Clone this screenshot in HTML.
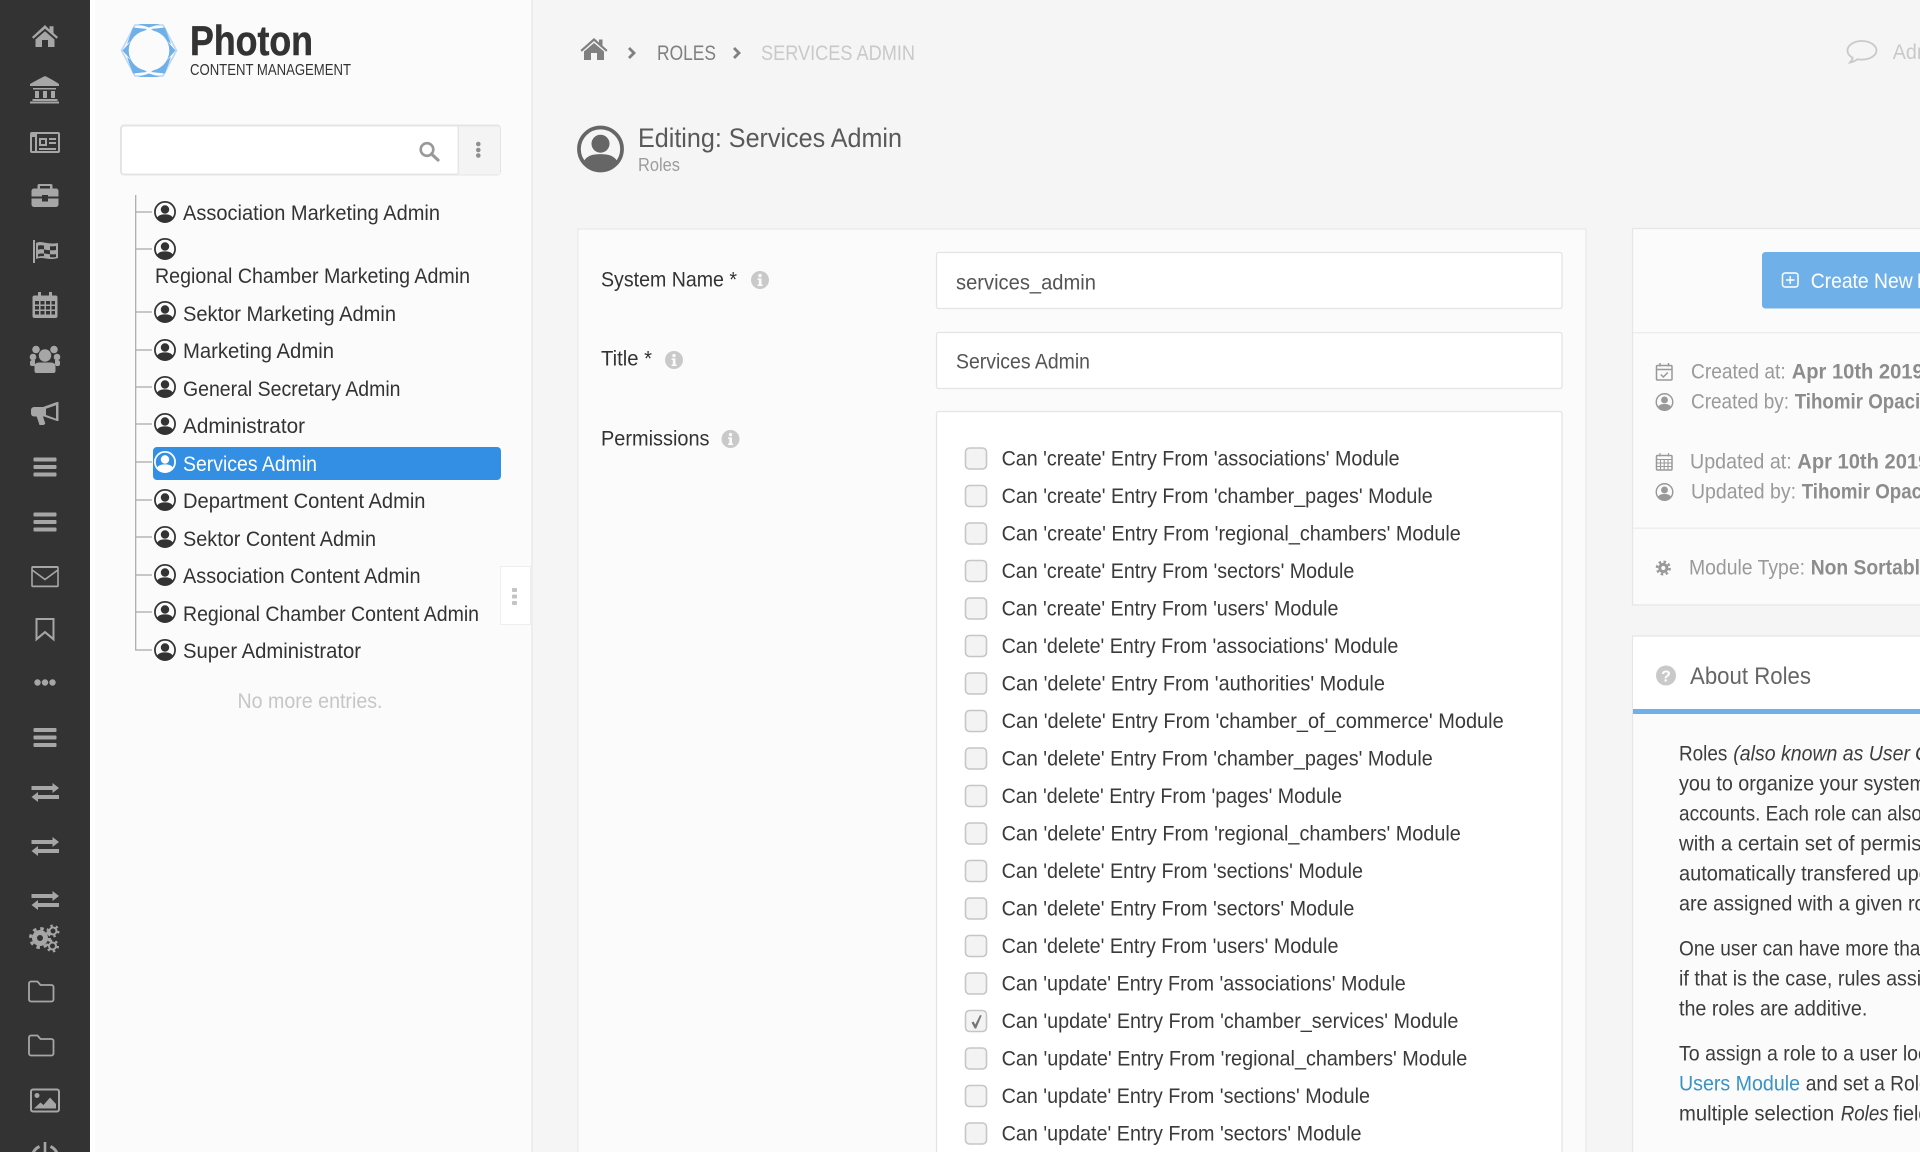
<!DOCTYPE html>
<html lang="en"><head><meta charset="utf-8"><title>Photon - Editing: Services Admin</title>
<style>
html,body{margin:0;padding:0;background:#f5f5f5;overflow:hidden;width:1920px;height:1152px}
svg{display:block}
text{font-family:"Liberation Sans",sans-serif;font-size:21px;fill:#333;white-space:pre}
.tree{fill:#333}
.perm{fill:#3a3a3a}
.meta{fill:#9a9a9a}
.b{font-weight:700;fill:#8c8c8c}
.p{fill:#3d3d3d}
.side path,.side rect.f,.side circle.f{fill:#a6a6a6}
</style></head><body>
<svg width="1920" height="1152" viewBox="0 0 1920 1152" xmlns="http://www.w3.org/2000/svg">
<defs>
<symbol id="u" viewBox="0 0 24 24"><circle cx="12" cy="12" r="11" fill="none" stroke="currentColor" stroke-width="1.9"/><circle cx="12" cy="9.3" r="4.6" fill="currentColor"/><path fill="currentColor" d="M3.4 18.3C5 15.4 8 14.6 12 14.6s7 .8 8.6 3.7A11 11 0 0 1 3.4 18.3Z"/></symbol>
<symbol id="i" viewBox="0 0 18 18"><circle cx="9" cy="9" r="9" fill="#c9c9c9"/><circle cx="9" cy="4.6" r="1.7" fill="#fbfbfb"/><path fill="#fbfbfb" d="M6.6 7.4h3.9v6h1.1v1.6H6.6v-1.6h1.2V9H6.6Z"/></symbol>
<symbol id="cb" viewBox="0 0 23 23"><rect x="1" y="1" width="21" height="21" rx="4" fill="#f3f3f3" stroke="#c6c6c6" stroke-width="1.6"/></symbol>
<g id="bars" fill="#a6a6a6"><rect x="33.5" y="0" width="23" height="4" rx="1"/><rect x="33.5" y="7.5" width="23" height="4" rx="1"/><rect x="33.5" y="15" width="23" height="4" rx="1"/></g>
<path id="arr" fill="#a6a6a6" d="M31.5 3h21V0l6.5 5-6.5 5V7h-21ZM59 12H38V9l-6.5 5 6.5 5v-3h21Z"/>
<path id="fold" fill="none" d="M31 0h6.5l3 3.5H51.500a2 2 0 0 1 2 2V18a2 2 0 0 1-2 2H31a2 2 0 0 1-2-2V2a2 2 0 0 1 2-2Z"/>
</defs>

<!-- backgrounds -->
<rect width="1920" height="1152" fill="#f5f5f5"/>
<rect x="90" width="441" height="1152" fill="#fbfbfb"/>
<rect x="90" width="5" height="1152" fill="#fff"/>
<rect x="531" width="2" height="1152" fill="#ededed"/>
<rect width="90" height="1152" fill="#333"/>

<!-- sidebar icons -->
<g class="side">
<path d="M45 25 32 37l1.400 1.800L45 28.700 56.600 38.800 58 37l-4.500-4V26.300h-4v3.300ZM35.500 39.500 45 31.200l9.500 8.300V47H48v-7h-6v7h-6.500Z"/>
<path d="M45 76C50 78.500 55 81 59 84v2H30v-2C35 81 40 78.500 45 76ZM33 88h23v1.500H33ZM35 91h4v7h-4ZM43 91h4v7h-4ZM51 91h4v7h-4ZM32.500 99h25v2h-25ZM30 101.500h29v2H30Z"/>
<path d="M30 134a2 2 0 0 1 2-2h26a2 2 0 0 1 2 2v17a2 2 0 0 1-2 2H32a2 2 0 0 1-2-2Zm7 0v17h21v-17Zm-5 3v14h3v-14Zm7 1h8v8h-8Zm2 2v4h4v-4Zm8-2h7v2h-7Zm0 4h7v2h-7Zm-10 6h17v2H39Z" fill-rule="evenodd"/>
<path d="M39 184h12a1.500 1.500 0 0 1 1.500 1.500v3h3.500a2.500 2.500 0 0 1 2.500 2.500v5.500H48v-1.500h-6v1.500H31.500V191a2.500 2.500 0 0 1 2.500-2.500h3.500v-3A1.500 1.500 0 0 1 39 184Zm1 2v2.500h10V186ZM31.500 198.500H42v3h6v-3h10.500v6a2.500 2.500 0 0 1-2.500 2.500H34a2.500 2.500 0 0 1-2.500-2.500Z" fill-rule="evenodd"/>
<path d="M33 240h2v23h-2ZM36 243c6-3 10 2 22 0v15c-10 3-15-2-22 1Zm2 2.600v4.200c2-.8 4-.8 6-.4v-3.800c-2-.4-4-.4-6 0Zm6 3.800v4c2 .3 4 .8 6 .9v-4c-2-.1-4-.5-6-.9Zm6 .9c2 .1 4 .1 6-.3v-4c-2 .4-4 .4-6 .3Zm-12 4v2.500c2-.8 4-.8 6-.6v-2.500c-2-.3-4-.2-6 .6Zm12 0v2.800c2 .3 4 .3 6-.1v-2.900c-2 .3-4 .3-6 .2Z" fill-rule="evenodd"/>
<path d="M38 292h3v3.500h8V292h3v3.500h3.500a2 2 0 0 1 2 2V316a2 2 0 0 1-2 2h-21a2 2 0 0 1-2-2V297.500a2 2 0 0 1 2-2H38Zm-3 9v3.500h4V301Zm5.500 0v3.500h4V301Zm5.500 0v3.500h4V301Zm5.500 0v3.500h3.500V301ZM35 306v3.500h4V306Zm5.500 0v3.500h4V306Zm5.500 0v3.500h4V306Zm5.500 0v3.500h3.500V306ZM35 311v3.500h4V311Zm5.500 0v3.500h4V311Zm5.500 0v3.500h4V311Zm5.500 0v3.500h3.500V311Z" fill-rule="evenodd"/>
<circle class="f" cx="36" cy="349.500" r="3.800"/><circle class="f" cx="54" cy="349.500" r="3.800"/><circle class="f" cx="33" cy="357" r="3.300"/><circle class="f" cx="57" cy="357" r="3.300"/><circle class="f" cx="45" cy="355.500" r="6.200"/>
<path d="M30 362c0-2 3-2.500 5-2v6h-3a2 2 0 0 1-2-2Zm30 0c0-2-3-2.500-5-2v6h3a2 2 0 0 0 2-2ZM34.500 366c0-3 3-3.500 5.500-3.500h10c2.500 0 5.500.5 5.500 3.500v5a2 2 0 0 1-2 2h-17a2 2 0 0 1-2-2Z"/>
<path fill-rule="evenodd" d="M34 407h9l14-5h1.500v19H57l-13-4.500h-1l2.300 7-1.500 1.500h-4.300l-2.800-8.500H34a3 3 0 0 1-3-3v-3.500a3 3 0 0 1 3-3Zm12 1.800v6.200l10 3.600V405.200Z"/>
<use href="#bars" y="457.500"/><use href="#bars" y="512.500"/><use href="#bars" y="728"/>
<path d="M33 566h24a1.800 1.800 0 0 1 1.800 1.800v17.700a1.800 1.800 0 0 1-1.800 1.800H33a1.800 1.800 0 0 1-1.800-1.800V567.800A1.800 1.800 0 0 1 33 566Zm-.2 2v1.500l12.200 9 12.200-9V568Zm0 3.500v14h24.400v-14L45 580.500Z" fill-rule="evenodd"/>
<path d="M35.500 618h19v23.500L45 633.500l-9.500 8Zm2 2v17l7.500-6.300 7.500 6.300v-17Z" fill-rule="evenodd"/>
<circle class="f" cx="37.500" cy="682.500" r="3.200"/><circle class="f" cx="45" cy="682.500" r="3.200"/><circle class="f" cx="52.500" cy="682.500" r="3.200"/>
<use href="#arr" y="783"/><use href="#arr" y="837"/><use href="#arr" y="891"/>
<g fill="none" stroke="#a6a6a6"><circle cx="40" cy="938" r="5.500" stroke-width="5"/><circle cx="40" cy="938" r="9.500" stroke-width="3" stroke-dasharray="3.500 3.960"/><circle cx="53" cy="931" r="3.500" stroke-width="2"/><circle cx="53" cy="931" r="5.300" stroke-width="2.400" stroke-dasharray="2.300 3.250"/><circle cx="52.500" cy="946" r="3.500" stroke-width="2"/><circle cx="52.500" cy="946" r="5.300" stroke-width="2.400" stroke-dasharray="2.300 3.250"/></g>
<use href="#fold" y="981.500" style="stroke:#a6a6a6;stroke-width:1.800"/><use href="#fold" y="1035.500" style="stroke:#a6a6a6;stroke-width:1.800"/>
<rect x="31" y="1089.500" width="28" height="22" rx="2" fill="none" stroke="#a6a6a6" stroke-width="2"/><circle class="f" cx="37" cy="1095.500" r="2.500"/>
<path d="M34 1108.500l6.500-6 3 2.500 6.500-7.500 6 6.500v4.500Z"/>
</g>
<path d="M39.500 1146.500A13 13 0 1 0 50.500 1146.500" fill="none" stroke="#a6a6a6" stroke-width="3"/>
<path d="M45 1142V1156" stroke="#a6a6a6" stroke-width="2.600"/>

<!-- logo -->
<path d="M121.500 50.500 135 25h28l13.500 25.500L163 76h-28Z" fill="none" stroke="#bcd8f2" stroke-width="1.600"/>
<g fill="#6fb0e8"><path d="M138 24h22l-11 3.500ZM133 27.500l14 1.500L127 44ZM165 27.500 151 29l20 15ZM122.500 50.500 131 41V60ZM175.500 50.500 167 41V60ZM127 57l20 15-14 1.500ZM171 57 151 72l14 1.500ZM138 77h22l-11-3.500Z"/></g>
<circle cx="149" cy="50.500" r="20.300" fill="#fbfbfb"/>
<text x="190" y="55" style="font-size:42px;font-weight:700;fill:#333;stroke:#333;stroke-width:.5px" textLength="123" lengthAdjust="spacingAndGlyphs">Photon</text>
<text x="190" y="75" style="font-size:16px;fill:#333" textLength="161" lengthAdjust="spacingAndGlyphs">CONTENT MANAGEMENT</text>

<!-- search -->
<rect x="121" y="125.500" width="379" height="49" rx="3" fill="#fff" stroke="#e4e4e4" stroke-width="2"/>
<path d="M458 126.500h40a2 2 0 0 1 2 2v44a2 2 0 0 1-2 2h-40Z" fill="#f4f4f4"/><rect x="457.500" y="126" width="1.500" height="48" fill="#e6e6e6"/>
<circle cx="427" cy="149.500" r="6.300" fill="none" stroke="#999" stroke-width="2.600"/><path d="M431.500 154 438 160" stroke="#999" stroke-width="3.200" stroke-linecap="round"/>
<g fill="#8f8f8f"><circle cx="478.300" cy="144" r="2.300"/><circle cx="478.300" cy="150" r="2.300"/><circle cx="478.300" cy="155.500" r="2.300"/></g>

<!-- tree -->
<path d="M135.700 195V650H152M136 212h16M136 249h16M136 312h16M136 350h16M136 387h16M136 424h16M136 462h16M136 500h16M136 537h16M136 575h16M136 612h16" fill="none" stroke="#a8a8a8" stroke-width="1.200"/>
<rect x="153" y="447" width="348" height="33" rx="4" fill="#338fe4"/>
<g color="#333">
<use href="#u" x="154" y="201" width="22" height="22"/><use href="#u" x="154" y="238" width="22" height="22"/><use href="#u" x="154" y="301" width="22" height="22"/><use href="#u" x="154" y="339" width="22" height="22"/><use href="#u" x="154" y="376" width="22" height="22"/><use href="#u" x="154" y="413" width="22" height="22"/><use href="#u" x="154" y="489" width="22" height="22"/><use href="#u" x="154" y="526" width="22" height="22"/><use href="#u" x="154" y="564" width="22" height="22"/><use href="#u" x="154" y="601" width="22" height="22"/><use href="#u" x="154" y="639" width="22" height="22"/>
</g>
<g color="#fff"><use href="#u" x="154" y="451" width="22" height="22"/></g>
<text class="tree" x="183" y="220" textLength="257" lengthAdjust="spacingAndGlyphs">Association Marketing Admin</text>
<text class="tree" x="155" y="283" textLength="315" lengthAdjust="spacingAndGlyphs">Regional Chamber Marketing Admin</text>
<text class="tree" x="183" y="321" textLength="213" lengthAdjust="spacingAndGlyphs">Sektor Marketing Admin</text>
<text class="tree" x="183" y="358" textLength="151" lengthAdjust="spacingAndGlyphs">Marketing Admin</text>
<text class="tree" x="183" y="396" textLength="217.500" lengthAdjust="spacingAndGlyphs">General Secretary Admin</text>
<text class="tree" x="183" y="433" textLength="122" lengthAdjust="spacingAndGlyphs">Administrator</text>
<text class="tree" x="183" y="471" style="fill:#fff" textLength="134" lengthAdjust="spacingAndGlyphs">Services Admin</text>
<text class="tree" x="183" y="508" textLength="242.500" lengthAdjust="spacingAndGlyphs">Department Content Admin</text>
<text class="tree" x="183" y="546" textLength="193" lengthAdjust="spacingAndGlyphs">Sektor Content Admin</text>
<text class="tree" x="183" y="583" textLength="237.500" lengthAdjust="spacingAndGlyphs">Association Content Admin</text>
<text class="tree" x="183" y="621" textLength="296" lengthAdjust="spacingAndGlyphs">Regional Chamber Content Admin</text>
<text class="tree" x="183" y="658" textLength="178" lengthAdjust="spacingAndGlyphs">Super Administrator</text>
<text x="237.500" y="708" style="fill:#c6c6c6" textLength="145" lengthAdjust="spacingAndGlyphs">No more entries.</text>
<rect x="500.500" y="566.500" width="30" height="58" fill="#fff" stroke="#eeeeee"/>
<g fill="#c4c4c4"><rect x="512" y="588" width="5" height="4" rx="1"/><rect x="512" y="594.500" width="5" height="4" rx="1"/><rect x="512" y="601" width="5" height="4" rx="1"/></g>

<!-- breadcrumb -->
<path fill="#808080" d="M594 38 580.500 50l1.300 1.700L594 41l12.200 10.700 1.300-1.700-5-4.400V39.500h-3.500v3ZM584 51.500 594 43l10 8.500V60h-7v-7h-6v7h-7Z"/>
<path d="M629 48l5 5-5 5M734 48l5 5-5 5" fill="none" stroke="#808080" stroke-width="2.800"/>
<text x="657" y="60" style="fill:#808080" textLength="59" lengthAdjust="spacingAndGlyphs">ROLES</text>
<text x="761" y="60" style="fill:#c9c9c9" textLength="154" lengthAdjust="spacingAndGlyphs">SERVICES ADMIN</text>
<path d="M1862 41c-8 0-14.500 4.200-14.500 9.500 0 3 2 5.600 5.200 7.300-.3 1.800-1.300 3.300-2.700 4.700 2.700-.4 5.300-1.500 7.300-3.300 1.500.3 3 .4 4.700.4 8 0 14.500-4.200 14.500-9.100S1870 41 1862 41Z" fill="none" stroke="#c9c9c9" stroke-width="1.800"/>
<text x="1892.700" y="59" style="fill:#c9c9c9" textLength="56" lengthAdjust="spacingAndGlyphs">Admin</text>

<!-- page title -->
<g color="#666"><use href="#u" x="577" y="125.500" width="47" height="47"/></g>
<text x="638" y="147" style="font-size:27px;fill:#595959" textLength="264" lengthAdjust="spacingAndGlyphs">Editing: Services Admin</text>
<text x="638" y="171" style="font-size:18px;fill:#9c9c9c" textLength="42" lengthAdjust="spacingAndGlyphs">Roles</text>

<!-- form card -->
<rect x="578" y="229" width="1008" height="930" fill="#fbfbfb" stroke="#e8e8e8" stroke-width="1.200"/>
<text x="601" y="286.600" textLength="136" lengthAdjust="spacingAndGlyphs">System Name *</text>
<use href="#i" x="751" y="271" width="18" height="18"/>
<text x="601" y="365.600" textLength="51" lengthAdjust="spacingAndGlyphs">Title *</text>
<use href="#i" x="665" y="351" width="18" height="18"/>
<text x="601" y="445.600" textLength="108.500" lengthAdjust="spacingAndGlyphs">Permissions</text>
<use href="#i" x="721.500" y="430" width="18" height="18"/>
<rect x="936.500" y="252.500" width="625.500" height="56" rx="2" fill="#fff" stroke="#e4e4e4" stroke-width="1.300"/>
<rect x="936.500" y="332.500" width="625.500" height="56" rx="2" fill="#fff" stroke="#e4e4e4" stroke-width="1.300"/>
<rect x="936.500" y="411.500" width="625.500" height="760" rx="2" fill="#fff" stroke="#e4e4e4" stroke-width="1.300"/>
<text x="956" y="289.600" style="fill:#555" textLength="140" lengthAdjust="spacingAndGlyphs">services_admin</text>
<text x="956" y="368.600" style="fill:#555" textLength="134" lengthAdjust="spacingAndGlyphs">Services Admin</text>

<!-- permissions -->
<use href="#cb" x="964.500" y="447" width="23" height="23"/><use href="#cb" x="964.500" y="484.500" width="23" height="23"/><use href="#cb" x="964.500" y="522" width="23" height="23"/><use href="#cb" x="964.500" y="559.500" width="23" height="23"/><use href="#cb" x="964.500" y="597" width="23" height="23"/><use href="#cb" x="964.500" y="634.500" width="23" height="23"/><use href="#cb" x="964.500" y="672" width="23" height="23"/><use href="#cb" x="964.500" y="709.500" width="23" height="23"/><use href="#cb" x="964.500" y="747" width="23" height="23"/><use href="#cb" x="964.500" y="784.500" width="23" height="23"/><use href="#cb" x="964.500" y="822" width="23" height="23"/><use href="#cb" x="964.500" y="859.500" width="23" height="23"/><use href="#cb" x="964.500" y="897" width="23" height="23"/><use href="#cb" x="964.500" y="934.500" width="23" height="23"/><use href="#cb" x="964.500" y="972" width="23" height="23"/><use href="#cb" x="964.500" y="1009.500" width="23" height="23"/><use href="#cb" x="964.500" y="1047" width="23" height="23"/><use href="#cb" x="964.500" y="1084.500" width="23" height="23"/><use href="#cb" x="964.500" y="1122" width="23" height="23"/>
<path d="M971.500 1022.500l2-1 1.800 3 4.700-9.500 1.700.5-5.500 13h-1.500Z" fill="#777"/>
<g transform="translate(0,-0.4)">
<text class="perm" x="1001.600" y="465.700" textLength="398" lengthAdjust="spacingAndGlyphs">Can 'create' Entry From 'associations' Module</text>
<text class="perm" x="1001.600" y="503.200" textLength="431.100" lengthAdjust="spacingAndGlyphs">Can 'create' Entry From 'chamber_pages' Module</text>
<text class="perm" x="1001.600" y="540.700" textLength="459.200" lengthAdjust="spacingAndGlyphs">Can 'create' Entry From 'regional_chambers' Module</text>
<text class="perm" x="1001.600" y="578.200" textLength="352.700" lengthAdjust="spacingAndGlyphs">Can 'create' Entry From 'sectors' Module</text>
<text class="perm" x="1001.600" y="615.700" textLength="336.800" lengthAdjust="spacingAndGlyphs">Can 'create' Entry From 'users' Module</text>
<text class="perm" x="1001.600" y="653.200" textLength="396.800" lengthAdjust="spacingAndGlyphs">Can 'delete' Entry From 'associations' Module</text>
<text class="perm" x="1001.600" y="690.700" textLength="383.300" lengthAdjust="spacingAndGlyphs">Can 'delete' Entry From 'authorities' Module</text>
<text class="perm" x="1001.600" y="728.200" textLength="502.100" lengthAdjust="spacingAndGlyphs">Can 'delete' Entry From 'chamber_of_commerce' Module</text>
<text class="perm" x="1001.600" y="765.700" textLength="431.100" lengthAdjust="spacingAndGlyphs">Can 'delete' Entry From 'chamber_pages' Module</text>
<text class="perm" x="1001.600" y="803.200" textLength="340.400" lengthAdjust="spacingAndGlyphs">Can 'delete' Entry From 'pages' Module</text>
<text class="perm" x="1001.600" y="840.700" textLength="459.200" lengthAdjust="spacingAndGlyphs">Can 'delete' Entry From 'regional_chambers' Module</text>
<text class="perm" x="1001.600" y="878.200" textLength="361.400" lengthAdjust="spacingAndGlyphs">Can 'delete' Entry From 'sections' Module</text>
<text class="perm" x="1001.600" y="915.700" textLength="352.700" lengthAdjust="spacingAndGlyphs">Can 'delete' Entry From 'sectors' Module</text>
<text class="perm" x="1001.600" y="953.200" textLength="336.800" lengthAdjust="spacingAndGlyphs">Can 'delete' Entry From 'users' Module</text>
<text class="perm" x="1001.600" y="990.700" textLength="404.100" lengthAdjust="spacingAndGlyphs">Can 'update' Entry From 'associations' Module</text>
<text class="perm" x="1001.600" y="1028.200" textLength="456.800" lengthAdjust="spacingAndGlyphs">Can 'update' Entry From 'chamber_services' Module</text>
<text class="perm" x="1001.600" y="1065.700" textLength="465.700" lengthAdjust="spacingAndGlyphs">Can 'update' Entry From 'regional_chambers' Module</text>
<text class="perm" x="1001.600" y="1103.200" textLength="368.400" lengthAdjust="spacingAndGlyphs">Can 'update' Entry From 'sections' Module</text>
<text class="perm" x="1001.600" y="1140.700" textLength="359.900" lengthAdjust="spacingAndGlyphs">Can 'update' Entry From 'sectors' Module</text>
</g>

<!-- right info card -->
<rect x="1632.500" y="228.500" width="320" height="376.500" fill="#fbfbfb" stroke="#e6e6e6" stroke-width="1.300"/>
<rect x="1762" y="252" width="200" height="56.500" rx="3.500" fill="#70b0e8"/>
<rect x="1782.500" y="273" width="15.500" height="14" rx="2.500" fill="none" stroke="#fff" stroke-width="1.500"/><path d="M1790.200 276v8M1786 280h8.500" stroke="#fff" stroke-width="1.400"/>
<text x="1810.700" y="288" style="fill:#fff" textLength="102" lengthAdjust="spacingAndGlyphs">Create New</text>
<text x="1916.500" y="288" style="fill:#fff">Item</text>
<rect x="1633" y="332" width="290" height="1.300" fill="#ececec"/>
<rect x="1633" y="527.500" width="290" height="1.300" fill="#ececec"/>
<g fill="none" stroke="#999" stroke-width="1.500">
<rect x="1656.500" y="365.500" width="15.500" height="14.500" rx="1"/><path d="M1656.500 369.500h15.500M1660 363v3.500M1668.500 363v3.500"/><path d="M1660.800 374.500l2.500 2.500 4.500-4.500"/>
<rect x="1656.500" y="455.500" width="15.500" height="14.500" rx="1"/><path d="M1656.500 459.500h15.500M1660 453v3.500M1668.500 453v3.500M1660.500 459.500v10.500M1664.200 459.500v10.500M1668 459.500v10.500M1656.500 463h15.500M1656.500 466.500h15.500" stroke-width="1.100"/>
</g>
<g color="#999"><use href="#u" x="1655.500" y="393" width="18" height="18"/><use href="#u" x="1655.500" y="483" width="18" height="18"/></g>
<circle cx="1663.300" cy="568" r="3.600" fill="none" stroke="#999" stroke-width="3"/><circle cx="1663.300" cy="568" r="6.300" fill="none" stroke="#999" stroke-width="2.500" stroke-dasharray="2.500 2.450"/>
<text class="meta" x="1691" y="378.600" textLength="94.700" lengthAdjust="spacingAndGlyphs">Created at:</text>
<text class="meta b" x="1791.700" y="378.600" textLength="132" lengthAdjust="spacingAndGlyphs">Apr 10th 2019</text>
<text class="meta" x="1691" y="408.500" textLength="98" lengthAdjust="spacingAndGlyphs">Created by:</text>
<text class="meta b" x="1794.700" y="408.500" textLength="136" lengthAdjust="spacingAndGlyphs">Tihomir Opacic</text>
<text class="meta" x="1690" y="468.600" textLength="101.700" lengthAdjust="spacingAndGlyphs">Updated at:</text>
<text class="meta b" x="1797.300" y="468.600" textLength="132" lengthAdjust="spacingAndGlyphs">Apr 10th 2019</text>
<text class="meta" x="1691" y="498.600" textLength="105" lengthAdjust="spacingAndGlyphs">Updated by:</text>
<text class="meta b" x="1801.700" y="498.600" textLength="136" lengthAdjust="spacingAndGlyphs">Tihomir Opacic</text>
<text class="meta" x="1689" y="574.500" textLength="116" lengthAdjust="spacingAndGlyphs">Module Type:</text>
<text class="meta b" x="1810.700" y="574.500" textLength="120" lengthAdjust="spacingAndGlyphs">Non Sortable</text>

<!-- about card -->
<rect x="1632.500" y="636" width="320" height="560" fill="#fbfbfb" stroke="#e6e6e6" stroke-width="1.300"/>
<rect x="1633" y="637" width="290" height="72" fill="#fff"/>
<rect x="1633" y="709" width="290" height="5" fill="#70b0e8"/>
<circle cx="1666" cy="675.500" r="10" fill="#c9c9c9"/>
<text x="1666" y="681.500" text-anchor="middle" style="font-size:16px;font-weight:700;fill:#fff">?</text>
<text x="1690" y="684" style="font-size:24px;fill:#666" textLength="121" lengthAdjust="spacingAndGlyphs">About Roles</text>

<text class="p" x="1679" y="760.500" textLength="48.300" lengthAdjust="spacingAndGlyphs">Roles</text>
<text class="p" x="1733.300" y="760.500" style="font-style:italic" textLength="176.700" lengthAdjust="spacingAndGlyphs">(also known as User</text>
<text class="p" x="1915" y="760.500" style="font-style:italic">Groups)</text>
<text class="p" x="1679" y="790.500" textLength="247" lengthAdjust="spacingAndGlyphs">you to organize your system</text>
<text class="p" x="1679" y="820.500" textLength="243" lengthAdjust="spacingAndGlyphs">accounts. Each role can also</text>
<text class="p" x="1679" y="850.500" textLength="290" lengthAdjust="spacingAndGlyphs">with a certain set of permissions</text>
<text class="p" x="1679" y="880.500" textLength="262" lengthAdjust="spacingAndGlyphs">automatically transfered upon</text>
<text class="p" x="1679" y="910.500" textLength="262" lengthAdjust="spacingAndGlyphs">are assigned with a given role</text>
<text class="p" x="1679" y="955.700" textLength="252" lengthAdjust="spacingAndGlyphs">One user can have more than</text>
<text class="p" x="1679" y="985.700" textLength="286" lengthAdjust="spacingAndGlyphs">if that is the case, rules assigned</text>
<text class="p" x="1679" y="1015.700" textLength="188.300" lengthAdjust="spacingAndGlyphs">the roles are additive.</text>
<text class="p" x="1679" y="1060.500" textLength="276" lengthAdjust="spacingAndGlyphs">To assign a role to a user locate</text>
<text x="1679" y="1090.500" style="fill:#3a93c4" textLength="121" lengthAdjust="spacingAndGlyphs">Users Module</text>
<text class="p" x="1805.700" y="1090.500" textLength="124" lengthAdjust="spacingAndGlyphs">and set a Role</text>
<text class="p" x="1679" y="1120.500" textLength="155.300" lengthAdjust="spacingAndGlyphs">multiple selection</text>
<text class="p" x="1840.700" y="1120.500" style="font-style:italic" textLength="48" lengthAdjust="spacingAndGlyphs">Roles</text>
<text class="p" x="1893.300" y="1120.500" textLength="36" lengthAdjust="spacingAndGlyphs">field</text>
</svg>
</body></html>
